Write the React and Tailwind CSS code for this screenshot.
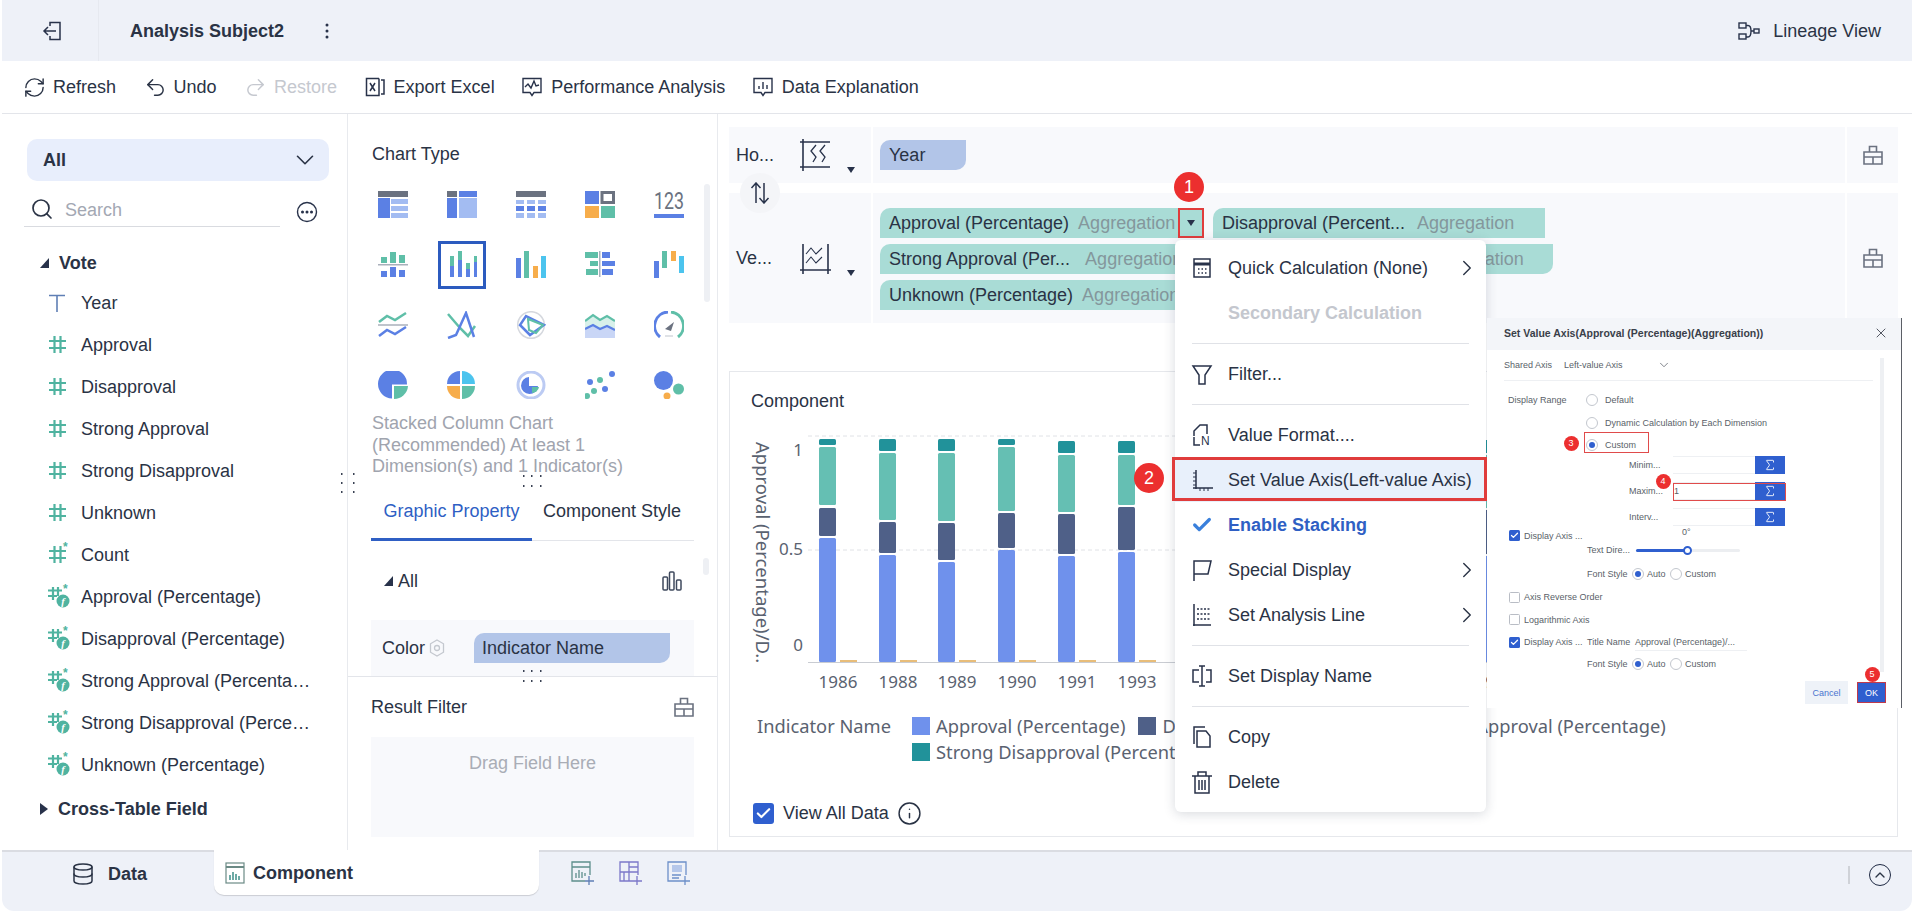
import { RefreshCw, Undo2, Redo2, Search, ChevronDown, ChevronRight, ChevronUp, X, Info, Database, Check, Sigma } from 'lucide-react'

const B = '#5b80e4'
const L = '#a3bcf2'
const T = '#5fbfa8'
const O = '#f7ad4b'
const C = '#4cc4ee'
const G = '#6b7280'

const chartIcons = [
  <><rect width="30" height="6" fill={G} /><rect y="7" width="12" height="20" fill={B} /><rect x="13" y="8" width="17" height="5" fill={L} /><rect x="13" y="15" width="17" height="5" fill={L} /><rect x="13" y="22" width="17" height="5" fill={L} /></>,
  <><rect width="10" height="6" fill={G} /><rect x="12" width="18" height="6" fill={B} /><rect y="7" width="10" height="20" fill={B} /><rect x="12" y="7" width="18" height="20" fill={L} /></>,
  <><rect width="30" height="6" fill={G} /><path d="M0 9h8v4H0zM11 9h8v4h-8zM22 9h8v4h-8zM0 22h8v5H0zM11 22h8v5h-8zM22 22h8v5h-8z" fill={L} /><path d="M0 15h8v5H0zM11 15h8v5h-8zM22 15h8v5h-8z" fill={B} /></>,
  <><rect width="14" height="13" fill={B} /><rect x="17" y="1.5" width="11.5" height="10" fill="none" stroke={G} strokeWidth="3" /><rect y="15" width="14" height="12" fill={O} /><rect x="16" y="15" width="14" height="12" fill={T} /></>,
  <><text x="15" y="18" textAnchor="middle" fontSize="24" fill={G} fontFamily="Roboto, sans-serif" textLength="30" lengthAdjust="spacingAndGlyphs">123</text><rect y="23" width="30" height="4" fill={B} /></>,
  <><path d="M3 6h6v6H3zM12 1h6v11h-6zM21 4h6v8h-6z" fill={T} /><rect y="13" width="30" height="1.5" fill="#aab0bb" /><path d="M3 20h6v6H3zM12 16h6v10h-6zM21 19h6v7h-6z" fill={B} /></>,
  <><path d="M3 5h4v10H3zM11 0h4v9h-4zM19 12h4v6h-4zM27 5h3v6h-3z" fill={T} /><path d="M3 15h4v11H3zM11 9h4v17h-4zM19 18h4v8h-4zM27 11h3v15h-3z" fill={B} /></>,
  <><rect y="7" width="5" height="20" fill={B} /><rect x="8" width="5" height="27" fill={T} /><rect x="17" y="15" width="5" height="12" fill={O} /><rect x="25" y="5" width="5" height="22" fill={C} /></>,
  <><path d="M0 1h13v6H0zM5 10h8v5H5zM1 18h12v6H1z" fill={T} /><rect x="14" width="1.5" height="26" fill="#aab0bb" /><path d="M17 1h8v6h-8zM17 10h13v5H17zM17 18h11v6H17z" fill={B} /></>,
  <><rect y="10" width="5" height="17" fill={B} /><rect x="8" width="5" height="17" fill={T} /><rect x="17" width="5" height="10" fill={O} /><rect x="25" y="5" width="5" height="17" fill={C} /></>,
  <g fill="none" strokeWidth="2.5"><path d="M1 11l8-6 8 4 11-7" stroke={T} /><path d="M0 14h30" stroke="#aab0bb" strokeWidth="1.5" /><path d="M1 25l8-6 8 4 11-7" stroke={B} /></g>,
  <g fill="none" strokeWidth="2.5"><path d="M1 3l12 14 8 8 7-10" stroke={T} /><path d="M1 27l8-3 10-22 8 24" stroke={B} /></g>,
  <g fill="none"><circle cx="15" cy="14" r="13.300" stroke="#d5d8de" strokeWidth="1.500" /><path d="M10 5l18 9-14 10L4 14z" stroke={B} strokeWidth="2.500" /><path d="M12 8l15 6-7 8-7-3z" stroke={T} strokeWidth="2" /></g>,
  <><path d="M0 10l8-6 7 5 7-4 8 5v17H0z" fill="#d8f0ea" /><path d="M0 18l8-4 7 4 7-3 8 4v8H0z" fill="#c9d6f6" /><path d="M0 10l8-6 7 5 7-4 8 5" fill="none" stroke={T} strokeWidth="2.2" /><path d="M0 18l8-4 7 4 7-3 8 4" fill="none" stroke={B} strokeWidth="2.2" /></>,
  <g fill="none"><path d="M6 26A14 14 0 0 1 14 1" stroke={B} strokeWidth="3" /><path d="M17 1a14 14 0 0 1 7 25" stroke={T} strokeWidth="3" /><path d="M11 18l9-7-3 9z" fill={G} /><path d="M11 25h8" stroke="#d5d8de" strokeWidth="1.500" /></g>,
  <><path d="M14 0v14h15A14.500 14.500 0 1 0 14 28z" fill={B} transform="translate(0 -.5)" /><path d="M16 15h14a14 14 0 0 1-14 13z" fill={T} /></>,
  <><path d="M13 0v13H0A13 13 0 0 1 13 0z" fill={B} /><path d="M15 0a13 13 0 0 1 13 13H15z" fill={C} /><path d="M13 15v13A13 13 0 0 1 0 15z" fill={O} /><path d="M15 15h13a13 13 0 0 1-13 13z" fill={T} /></>,
  <g fill="none"><circle cx="15" cy="14" r="13" stroke="#bccbf3" strokeWidth="3" /><path d="M14 6v9h9a8.500 8.500 0 1 1-9-9z" fill={B} transform="translate(-1 0)" /><path d="M16 16h7a7 7 0 0 1-7 6z" fill={T} /></g>,
  <g><circle cx="27" cy="3" r="3" fill={B} /><circle cx="15" cy="9" r="3" fill={T} /><circle cx="5" cy="11" r="3" fill={B} /><circle cx="9" cy="20" r="3" fill={T} /><circle cx="20" cy="18" r="3" fill={B} /><circle cx="2" cy="25" r="3" fill={T} /></g>,
  <g><circle cx="9.500" cy="9.500" r="9.500" fill={B} /><circle cx="24.500" cy="18" r="5.500" fill={T} /><circle cx="13" cy="25" r="3.500" fill={O} /></g>,
]

const fields = [
  ['t', 'Year'],
  ['n', 'Approval'],
  ['n', 'Disapproval'],
  ['n', 'Strong Approval'],
  ['n', 'Strong Disapproval'],
  ['n', 'Unknown'],
  ['s', 'Count'],
  ['f', 'Approval (Percentage)'],
  ['f', 'Disapproval (Percentage)'],
  ['f', 'Strong Approval (Percentage)'],
  ['f', 'Strong Disapproval (Percentage)'],
  ['f', 'Unknown (Percentage)'],
]

// top edge of each stacked segment, from the top of the bar down
const bars = [
  [1986, 439, 447, 508, 538, 445, 505, 536],
  [1988, 439, 453, 522, 555, 451, 520, 553],
  [1989, 439, 453, 523, 562, 451, 521, 560],
  [1990, 439, 447, 513, 550, 445, 511, 548],
  [1991, 441, 455, 514, 556, 453, 512, 554],
  [1993, 441, 455, 507, 552, 453, 505, 550],
  [1994, 442, 456, 510, 556, 454, 508, 554],
  [1995, 440, 452, 515, 558, 450, 513, 556],
  [1996, 441, 455, 512, 552, 453, 510, 550],
  [1997, 440, 454, 512, 554, 452, 510, 552],
  [1998, 440, 453, 514, 552, 451, 512, 550],
  [1999, 440, 455, 510, 556, 453, 508, 554],
]

function FieldIcon({ kind }) {
  if (kind === 't') {
    return (
      <svg width="18" height="20" viewBox="0 0 18 20" fill="none" stroke="#5f7fb5" strokeWidth="1.6">
        <path d="M1 2.500h16M9 2.500V19" />
      </svg>
    )
  }
  return (
    <svg width="22" height="24" viewBox="0 0 22 24" fill="none" stroke="#4fb3a0" strokeWidth="2.200" className="overflow-visible">
      {kind === 'n' || kind === 's' ? (
        <path d="M6.500 3v17M12.500 3v17M1 8h17M1 15h17" />
      ) : (
        <path d="M5 2v13M10 2v9M0 5.500h14M0 11h9" />
      )}
      {kind !== 'n' && <text x="15" y="8" fontSize="12" fontWeight="700" fill="#4fb3a0" stroke="none" fontFamily="Liberation Sans, sans-serif">*</text>}
      {kind === 'f' && (
        <>
          <circle cx="15" cy="16" r="6.500" fill="#4fb3a0" stroke="none" />
          <text x="15" y="20" textAnchor="middle" fontSize="10.500" fontWeight="700" fontStyle="italic" fill="#fff" stroke="none" fontFamily="Liberation Serif, serif">f</text>
        </>
      )}
    </svg>
  )
}

function Caret({ open }) {
  return open ? (
    <svg width="9" height="10" viewBox="0 0 9 10" fill="#28324a"><path d="M9 0v10H0z" /></svg>
  ) : (
    <svg width="8" height="12" viewBox="0 0 8 12" fill="#28324a"><path d="M0 0l8 6-8 6z" /></svg>
  )
}

function LeftPanel() {
  return (
    <div className="w-[346px] shrink-0 border-r border-[#e8eaee] flex flex-col">
      <div className="mt-[25px] ml-[25px] w-[302px] h-[42px] rounded-[10px] bg-[#e8eefc] flex items-center justify-between pl-[16px] pr-[9px]">
        <span className="font-bold">All</span>
        <ChevronDown size={30} strokeWidth={1.300} />
      </div>
      <div className="mt-[18px] ml-[22px] flex items-center h-[28px]">
        <div className="w-[256px] h-[28px] border-b border-[#d9dbe0] flex items-start gap-[11px] pl-[6px]">
          <Search size={24} strokeWidth={1.7} className="-mt-[2px]" />
          <span className="text-[#a3a8b3] leading-[22px]">Search</span>
        </div>
        <svg width="22" height="22" viewBox="0 0 22 22" className="ml-[16px] -mt-[3px]" fill="none" stroke="#28324a" strokeWidth="1.400">
          <circle cx="11" cy="11" r="9.500" />
          <circle cx="6.500" cy="11" r="0.800" fill="#28324a" />
          <circle cx="11" cy="11" r="0.800" fill="#28324a" />
          <circle cx="15.500" cy="11" r="0.800" fill="#28324a" />
        </svg>
      </div>
      <div className="mt-[24px] ml-[38px] h-[24px] flex items-center gap-[10px] font-bold">
        <Caret open />
        <span>Vote</span>
      </div>
      <div className="mt-[7px] flex flex-col">
        {fields.map(([kind, name]) => (
          <div key={name} className="h-[42px] flex items-center pl-[46px]">
            <span className="w-[33px] flex"><FieldIcon kind={kind} /></span>
            <span className="w-[231px] truncate">{name}</span>
          </div>
        ))}
      </div>
      <div className="mt-[2px] ml-[38px] h-[42px] flex items-center gap-[10px] font-bold">
        <Caret />
        <span>Cross-Table Field</span>
      </div>
    </div>
  )
}

function MiddlePanel() {
  return (
    <div className="w-[370px] shrink-0 border-r border-[#e8eaee] flex flex-col">
      <div className="h-[563px] overflow-hidden border-b border-[#e3e5ea] flex flex-col">
        <div className="mt-[28px] ml-[24px] h-[24px] leading-[24px]">Chart Type</div>
        <div className="mt-[9px] ml-[10px] w-[346px] grid grid-cols-5">
          {chartIcons.map((icon, i) => (
            <div key={i} className={`h-[60px] flex items-center justify-center ${i === 6 ? 'relative' : ''}`}>
              {i === 6 && <div className="absolute left-[11px] top-[6px] w-[48px] h-[48px] border-[3px] border-[#2c5bbf]" />}
              <svg width="30" height="28" viewBox="0 0 30 28">{icon}</svg>
            </div>
          ))}
        </div>
        <div className="-mt-[2px] ml-[24px] w-[320px] leading-[21.5px] text-[#a0a4ae]">
          Stacked Column Chart (Recommended) At least 1 Dimension(s) and 1 Indicator(s)
        </div>
        <div className="mt-[12px] mx-[23px] h-[51px] border-b border-[#e3e5ea] flex">
          <div className="w-[161px] h-[51px] border-b-[3px] border-[#2f5fc4] text-[#2f5fc4] flex items-center justify-center pb-[5px]">Graphic Property</div>
          <div className="flex-1 flex items-center pl-[11px] pb-[8px]">Component Style</div>
        </div>
        <div className="mt-[28px] mx-[36px] h-[24px] flex items-center justify-between">
          <div className="flex items-center gap-[5px]"><Caret open /><span>All</span></div>
          <svg width="20" height="20" viewBox="0 0 20 20" fill="none" stroke="#3f4a5e" strokeWidth="1.500" className="-mr-[1px]">
            <rect x="1" y="6" width="4.500" height="13" rx="1" />
            <rect x="7.500" y="1" width="4.500" height="18" rx="1" />
            <rect x="14.500" y="9" width="4.500" height="10" rx="1" />
          </svg>
        </div>
        <div className="mt-[27px] mx-[23px] h-[60px] bg-[#f8f9fc] flex items-start pt-[13px] pl-[11px]">
          <div className="w-[92px] h-[30px] flex items-center gap-[4px]">
            <span>Color</span>
            <svg width="16" height="18" viewBox="0 0 16 18" fill="none" stroke="#c4c8cf" strokeWidth="1.300">
              <path d="M8 1l6.500 3.800v8.400L8 17l-6.500-3.800V4.800z" />
              <circle cx="8" cy="9" r="2.500" />
            </svg>
          </div>
          <div className="w-[196px] h-[30px] bg-[#b2c5e8] rounded-tl-[10px] rounded-br-[10px] flex items-center pl-[8px]">Indicator Name</div>
        </div>
      </div>
      <div className="flex-1 flex flex-col px-[23px]">
        <div className="mt-[18px] h-[24px] flex items-center justify-between">
          <span>Result Filter</span>
          <CubeIcon />
        </div>
        <div className="mt-[18px] h-[100px] bg-[#f8f9fc] text-[#a9adb6] text-center pt-[14px]">Drag Field Here</div>
      </div>
    </div>
  )
}

function CubeIcon() {
  return (
    <svg width="20" height="20" viewBox="0 0 20 20" fill="none" stroke="#6b7280" strokeWidth="1.600">
      <path d="M1 7h18v12H1zM6.500 7V1.500h7V7M1 12h18M10 12v7" />
    </svg>
  )
}

function Pill({ name, agg, w, gap = 9, last, children }) {
  return (
    <div className={`h-[30px] bg-[#a9dcd6] flex items-center pl-[9px] whitespace-nowrap shrink-0 ${last ? 'rounded-br-[10px]' : ''} rounded-tl-[10px]`} style={{ width: w }}>
      <span>{name}</span>
      <span className="text-[#84979c]" style={{ marginLeft: gap }}>{agg}</span>
      {children}
    </div>
  )
}

function AxisIcon({ vertical }) {
  return (
    <svg width="32" height="32" viewBox="0 0 32 32" fill="none" stroke="#28324a" strokeWidth="1.600">
      {vertical ? (
        <>
          <path d="M3 2v30M28 2v30M0 28h31" />
          <path d="M6 12l5-6 5 6 6-6 M6 21l5-6 5 6 6-6" strokeWidth="1.100" />
        </>
      ) : (
        <>
          <path d="M3 0v32M0 3h30M0 28h30" />
          <path d="M16 6l-5 6 5 6-3 5M25 6l-5 6 5 6-3 5" strokeWidth="1.300" />
        </>
      )}
    </svg>
  )
}

function FieldRow({ label, vertical, h, children }) {
  return (
    <div className="flex gap-[2px]" style={{ height: h }}>
      <div className="w-[142px] bg-[#f8f9fc] flex items-center pl-[7px] relative">
        <span className="w-[64px]">{label}</span>
        <AxisIcon vertical={vertical} />
        <span className="ml-[15px] mt-[30px] w-0 h-0 border-x-[4px] border-x-transparent border-t-[6px] border-t-[#28324a]" />
      </div>
      <div className="flex-1 bg-[#f8f9fc] overflow-hidden">{children}</div>
      <div className="w-[51px] bg-[#f8f9fc] flex items-center justify-center"><CubeIcon /></div>
    </div>
  )
}

function Chart() {
  return (
    <svg viewBox="730 430 1167 270" className="block w-[1167px] h-[270px] shrink-0" fontFamily="Noto Sans, sans-serif" fontSize="17" fill="#5a6270">
      <text transform="translate(756 442) rotate(90)" fontSize="18.500">Approval (Percentage)/D..</text>
      <text x="803" y="456" textAnchor="end">1</text>
      <text x="803" y="555" textAnchor="end">0.5</text>
      <text x="803" y="651" textAnchor="end">0</text>
      <path d="M808 436H1490M808 550H1490" stroke="#e0e2e6" strokeDasharray="4 3" />
      <path d="M808 662.500H1490" stroke="#c9ccd2" />
      {bars.map(([year, dk, lt, sl, bl, dkEnd, ltEnd, slEnd], i) => {
        const x = 819 + Math.round(i * 59.700)
        return (
          <g key={year}>
            <rect x={x} y={dk} width="17" height={dkEnd - dk} rx="1.500" fill="#21929a" />
            <rect x={x} y={lt} width="17" height={ltEnd - lt} rx="1.500" fill="#65bfb3" />
            <rect x={x} y={sl} width="17" height={slEnd - sl} rx="1.500" fill="#4f6088" />
            <rect x={x} y={bl} width="17" height={662 - bl} rx="1.500" fill="#6f91ec" />
            <rect x={x + 21} y="660" width="17" height="2" fill="#e8bd7a" />
            <text x={x + 19} y="688" textAnchor="middle">{year}</text>
          </g>
        )
      })}
    </svg>
  )
}

function ChartCard() {
  const legend = [
    ['#6f91ec', 'Approval (Percentage)'],
    ['#4f6088', 'Disapproval (Percentage)'],
    ['#65bfb3', 'Strong Approval (Percentage)'],
    ['#21929a', 'Strong Disapproval (Percentage)'],
    ['#e8bd7a', 'Unknown (Percentage)'],
  ]
  return (
    <div className="mt-[48px] h-[466px] border border-[#e6e8ec] flex flex-col">
      <div className="mt-[17px] ml-[21px] h-[24px] leading-[24px] shrink-0">Component</div>
      <div className="mt-[17px] shrink-0"><Chart /></div>
      <div className="mt-[13px] ml-[27px] flex text-[18.300px] text-[#5a6270] font-['Noto_Sans',sans-serif] leading-[26px]">
        <span className="w-[155px] shrink-0">Indicator Name</span>
        <div className="w-[780px] flex flex-wrap gap-x-[13px]">
          {legend.map(([color, name]) => (
            <span key={name} className="flex items-center gap-[6px] whitespace-nowrap">
              <span className="w-[18px] h-[18px] shrink-0" style={{ background: color }} />
              {name}
            </span>
          ))}
        </div>
      </div>
      <div className="mt-[36px] ml-[23px] flex items-center h-[24px]">
        <span className="w-[21px] h-[21px] rounded-[3px] bg-[#2f5fcf] flex items-center justify-center">
          <Check size={17} strokeWidth={3} color="#fff" />
        </span>
        <span className="ml-[9px] mr-[8px]">View All Data</span>
        <Info size={25} strokeWidth={1.400} />
      </div>
    </div>
  )
}

function Badge({ n, x, y, size = 30, text = 'text-[18px]' }) {
  return (
    <div className={`absolute rounded-full bg-[#ec2f2f] text-white flex items-center justify-center ${text}`} style={{ left: x - size / 2, top: y - size / 2, width: size, height: size }}>
      {n}
    </div>
  )
}

function MenuIcon({ children }) {
  return (
    <svg width="22" height="24" viewBox="0 0 22 24" fill="none" stroke="#28324a" strokeWidth="1.500" className="shrink-0">
      {children}
    </svg>
  )
}

function MenuItem({ icon, children, arrow, className = '' }) {
  return (
    <div className={`h-[45px] flex items-center pl-[16px] pr-[6px] ${className}`}>
      <span className="w-[37px] shrink-0 flex">{icon}</span>
      <span className="flex-1 whitespace-nowrap">{children}</span>
      {arrow && <ChevronRight size={26} strokeWidth={1.300} />}
    </div>
  )
}

function Divider() {
  return <div className="mx-[17px] mt-[8px] mb-[7px] h-px bg-[#e0e2e7]" />
}

function ContextMenu() {
  return (
    <div className="absolute left-[1175px] top-[240px] w-[311px] h-[572px] bg-white rounded-[6px] shadow-[0_2px_12px_rgba(40,50,70,0.18)] pt-[5px]">
      <MenuItem arrow icon={<MenuIcon><rect x="3" y="3" width="16" height="18" /><path d="M3 8h16" strokeWidth="3" /><path d="M7 13h1.500M10.500 13H12M14 13h1.500M7 17h1.500M10.500 17H12M14 17h1.500" /></MenuIcon>}>Quick Calculation (None)</MenuItem>
      <MenuItem className="font-bold text-[#c4c7ce]">Secondary Calculation</MenuItem>
      <Divider />
      <MenuItem icon={<MenuIcon><path d="M2 4h18l-6 9v9H8v-9z" /></MenuIcon>}>Filter...</MenuItem>
      <Divider />
      <MenuItem icon={<MenuIcon><path d="M3 13V8l6-6h7v9M3 14v8h6" /><text x="10" y="22" fontSize="12" fill="#28324a" stroke="none" fontFamily="Liberation Sans, sans-serif">N</text></MenuIcon>}>Value Format....</MenuItem>
      <MenuItem className="bg-[#e8f0fb]" icon={<MenuIcon><path d="M5 2v19M2 20h20" /><path d="M2 5h3M2 9h3M2 13h3M2 17h3M9 20v3M13 20v3M17 20v3" strokeWidth="1" /></MenuIcon>}>Set Value Axis(Left-value Axis)</MenuItem>
      <MenuItem className="font-bold text-[#2f5fc4]" icon={<Check size={22} strokeWidth={3.500} color="#3a80dc" />}>Enable Stacking</MenuItem>
      <MenuItem arrow icon={<MenuIcon><path d="M3 23V3h17l-3 13H3" /></MenuIcon>}>Special Display</MenuItem>
      <MenuItem arrow icon={<MenuIcon><path d="M6 6h14M6 11h14M6 16h14" strokeDasharray="2 1.500" /><path d="M3 1v22M2 22h18" /></MenuIcon>}>Set Analysis Line</MenuItem>
      <Divider />
      <MenuItem icon={<MenuIcon><path d="M8 6H2v12h6M15 6h5v12h-5M8 2h6M8 22h6M11 2v20" /></MenuIcon>}>Set Display Name</MenuItem>
      <Divider />
      <MenuItem icon={<MenuIcon><path d="M3 19V2h11M6 22V6h9l4 5v11z" /></MenuIcon>}>Copy</MenuItem>
      <MenuItem icon={<MenuIcon><path d="M1 6h20M7 6V2h8v4M4 6v17h14V6M8 10v10M11 10v10M14 10v10" /></MenuIcon>}>Delete</MenuItem>
    </div>
  )
}

function Radio({ on }) {
  return (
    <span className="w-[12px] h-[12px] rounded-full border border-[#c3c7ce] flex items-center justify-center shrink-0 bg-white">
      {on && <span className="w-[6px] h-[6px] rounded-full bg-[#2f5fcf]" />}
    </span>
  )
}

function Tick({ on }) {
  return on ? (
    <span className="w-[11px] h-[11px] rounded-[1.500px] bg-[#2f5fcf] flex items-center justify-center shrink-0">
      <Check size={9} strokeWidth={3.500} color="#fff" />
    </span>
  ) : (
    <span className="w-[11px] h-[11px] rounded-[1.500px] border border-[#b9bdc5] shrink-0" />
  )
}

function FontStyleRow() {
  return (
    <div className="flex items-center h-full">
      <span className="w-[45px]">Font Style</span>
      <Radio on />
      <span className="ml-[3px] w-[23px]">Auto</span>
      <Radio />
      <span className="ml-[3px]">Custom</span>
    </div>
  )
}

function SigmaInput({ label, value }) {
  return (
    <div className="h-[26px] flex items-center pl-[142px]">
      <span className="w-[44px]">{label}</span>
      <span className="w-[82px] h-[18px] border-y border-[#eef0f3] leading-[16px] pl-[1px]">{value}</span>
      <span className="w-[30px] h-[18px] bg-[#2f5fcf] flex items-center justify-center">
        <Sigma size={14} color="#fff" strokeWidth={1.500} />
      </span>
    </div>
  )
}

function AxisDialog() {
  return (
    <div className="absolute left-[1487px] top-[318px] w-[415px] h-[390px] bg-white border-r border-[#5b5f66] text-[9px] leading-[12px] text-[#5a5f69] font-['Liberation_Sans',sans-serif]">
      <div className="h-[32px] bg-[#f3f5f9] flex items-center justify-between pl-[17px] pr-[12px] pb-[2px]">
        <span className="font-bold text-[#3a3f4a] text-[10.500px]">Set Value Axis(Approval (Percentage)(Aggregation))</span>
        <X size={16} strokeWidth={1.300} color="#3a3f4a" />
      </div>
      <div className="mx-[17px] w-[369px] h-[31px] border-b border-[#eef0f3] flex items-center">
        <span className="w-[60px]">Shared Axis</span>
        <span className="w-[93px]">Left-value Axis</span>
        <ChevronDown size={14} strokeWidth={1.300} />
      </div>
      <div className="mt-[8px] -mb-[4.500px] pl-[21px]">
        <div className="h-[22.500px] flex items-center">
          <span className="w-[78px]">Display Range</span><Radio /><span className="ml-[7px]">Default</span>
        </div>
        <div className="h-[22.500px] flex items-center pl-[78px]">
          <Radio /><span className="ml-[7px]">Dynamic Calculation by Each Dimension</span>
        </div>
        <div className="h-[22.500px] flex items-center pl-[78px]">
          <Radio on /><span className="ml-[7px]">Custom</span>
        </div>
      </div>
      <SigmaInput label="Minim..." />
      <SigmaInput label="Maxim..." value="1" />
      <SigmaInput label="Interv..." />
      <div className="-mt-[4px] flex pl-[22px] h-[60px]">
        <div className="w-[78px] pt-[4px] flex items-start gap-[4px] whitespace-nowrap"><Tick on /><span>Display Axis ...</span></div>
        <div className="flex-1">
          <div className="h-[12px] pl-[95px]">0°</div>
          <div className="h-[24px] flex items-center">
            <span className="w-[49px]">Text Dire...</span>
            <div className="relative w-[104px] h-[3px] rounded-full bg-[#eceef1]">
              <div className="w-[52px] h-[3px] rounded-full bg-[#2f5fcf]" />
              <div className="absolute left-[47px] -top-[3px] w-[9px] h-[9px] rounded-full bg-white border-2 border-[#2f5fcf]" />
            </div>
          </div>
          <div className="h-[24px]"><FontStyleRow /></div>
        </div>
      </div>
      <div className="h-[22.500px] flex items-center gap-[4px] pl-[22px]"><Tick /><span>Axis Reverse Order</span></div>
      <div className="h-[22.500px] flex items-center gap-[4px] pl-[22px]"><Tick /><span>Logarithmic Axis</span></div>
      <div className="h-[22px] flex items-center pl-[22px] whitespace-nowrap">
        <span className="w-[78px] flex items-center gap-[4px]"><Tick on /><span>Display Axis ...</span></span>
        <span className="w-[48px]">Title Name</span>
        <span className="w-[112px] h-[18px] border-b border-[#eef0f3] leading-[18px]">Approval (Percentage)/...</span>
      </div>
      <div className="h-[22px] pl-[100px]"><FontStyleRow /></div>
      <div className="mt-[6px] h-[23px] flex justify-end items-center gap-[9px] pr-[15px]">
        <span className="w-[43px] h-[23px] bg-[#eef2f8] text-[#4a74cf] flex items-center justify-center">Cancel</span>
        <span className="w-[29px] h-[21px] bg-[#2f5fcf] border border-[#c0394b] text-white flex items-center justify-center">OK</span>
      </div>
      <div className="absolute left-[393px] top-[40px] w-[4px] h-[314px] bg-[#eef0f3]" />
      <div className="absolute left-[97px] top-[114px] w-[65px] h-[21px] border border-[#e04b4b]" />
      <div className="absolute left-[186px] top-[165px] w-[113px] h-[18px] border border-[#e04b4b]" />
      <Badge n="3" x={84} y={125} size={15} text="text-[9px]" />
      <Badge n="4" x={176} y={163} size={15} text="text-[9px]" />
      <Badge n="5" x={385} y={356} size={15} text="text-[9px]" />
    </div>
  )
}

function HandleDots({ x, y, vertical }) {
  const cols = vertical ? [0, 12] : [0, 8, 17]
  const rows = vertical ? [0, 9, 18] : [0, 10]
  return (
    <svg className="absolute" style={{ left: x, top: y }} width="20" height="20" fill="#3a4254">
      {cols.map((cx) => rows.map((cy) => <rect key={`${cx}-${cy}`} x={cx} y={cy} width="1.500" height="2" />))}
    </svg>
  )
}

function ToolItem({ icon, children, muted, gap = 7 }) {
  return (
    <div className={`flex items-center ${muted ? 'text-[#c5c8cf]' : ''}`} style={{ gap }}>
      {icon}
      <span>{children}</span>
    </div>
  )
}

function BottomBar() {
  return (
    <div className="h-[61px] shrink-0 bg-[#eef1f8] border-t-2 border-[#dadce2] rounded-b-[12px] flex items-start relative">
      <div className="w-[212px] h-[43px] flex items-center pl-[69px] gap-[13px] font-bold">
        <Database size={24} strokeWidth={1.500} />
        <span>Data</span>
      </div>
      <div className="w-[325px] h-[45px] bg-white rounded-b-[10px] -mt-[2px] shadow-[0_1px_1px_rgba(0,0,0,0.15)] flex items-center pl-[11px] gap-[8px] font-bold">
        <svg width="20" height="22" viewBox="0 0 20 22" fill="none" stroke="#6b8a85" strokeWidth="1.200">
          <rect x="1" y="1" width="18" height="20" />
          <path d="M1 5h18" strokeWidth="2" />
          <path d="M5 18v-5M8 18v-8M11 18v-6M14 18v-4" stroke="#3e8f88" strokeWidth="1.500" />
        </svg>
        <span>Component</span>
      </div>
      <div className="ml-[32px] mt-[9px] flex gap-[25px]">
        <svg width="23" height="25" viewBox="0 0 23 25" fill="none" stroke="#5d8f8c" strokeWidth="1.300">
          <path d="M14 20H1V1h18v13M1 6h18" />
          <path d="M5 17v-5M8 17v-8M11 17v-6M14 15v-3" />
          <path d="M18 15v9M14 20h9" stroke="#5f7fb5" />
        </svg>
        <svg width="23" height="25" viewBox="0 0 23 25" fill="none" stroke="#7c78c9" strokeWidth="1.300">
          <path d="M14 20H1V1h18v13M10 1v19M1 11h18M5 11v9M10 6h9" />
          <path d="M18 15v9M14 20h9" />
        </svg>
        <svg width="23" height="25" viewBox="0 0 23 25" fill="none" stroke="#6d90c9" strokeWidth="1.300">
          <path d="M14 20H1V1h18v13" />
          <rect x="5" y="4" width="10" height="7" fill="#b5c7ea" stroke="none" />
          <path d="M5 14h9M5 17h7M18 15v9M14 20h9" />
        </svg>
      </div>
      <div className="absolute left-[1846px] top-[14px] w-[2px] h-[18px] bg-[#cfd2d8]" />
      <div className="absolute left-[1867px] top-[12px] w-[22px] h-[22px] rounded-full border-[1.500px] border-[#1f2a44] flex items-center justify-center">
        <ChevronUp size={16} strokeWidth={2} />
      </div>
    </div>
  )
}

export default function App() {
  return (
    <div className="relative w-[1917px] h-[911px] overflow-hidden bg-white font-['Liberation_Sans',Arial,sans-serif] text-[18px] leading-[24px] text-[#2a3345]">
      <div className="ml-[2px] w-[1910px] h-[911px] flex flex-col">
        <header className="h-[61px] shrink-0 bg-[#eef1f8] flex items-center">
          <div className="w-[97px] h-full border-r border-[#e6e9f0] flex items-center justify-center pl-[4px]">
            <svg width="20" height="20" viewBox="0 0 20 20" fill="none" stroke="#28324a" strokeWidth="1.500">
              <path d="M8 5V1.500h10v17H8V15M14 10H2M6 6l-4 4 4 4" />
            </svg>
          </div>
          <span className="ml-[31px] font-bold">Analysis Subject2</span>
          <svg width="4" height="16" viewBox="0 0 4 16" fill="#28324a" className="ml-[41px]">
            <circle cx="2" cy="2" r="1.500" /><circle cx="2" cy="8" r="1.500" /><circle cx="2" cy="14" r="1.500" />
          </svg>
          <div className="ml-auto mr-[31px] flex items-center gap-[13px]">
            <svg width="22" height="18" viewBox="0 0 22 18" fill="none" stroke="#28324a" strokeWidth="1.400">
              <rect x="1" y="1" width="7" height="5" />
              <rect x="1" y="12" width="7" height="5" />
              <path d="M8 3.500h2c3 0 3 3 3 5.500s0 6-3 6H8M13 9h3" />
              <rect x="16" y="7" width="5" height="4" />
            </svg>
            <span>Lineage View</span>
          </div>
        </header>
        <div className="h-[53px] shrink-0 border-b border-[#e3e5ea] flex items-center pl-[21px] gap-[27.500px]">
          <ToolItem icon={<RefreshCw size={23} strokeWidth={1.500} />}>Refresh</ToolItem>
          <ToolItem icon={<Undo2 size={23} strokeWidth={1.500} />}>Undo</ToolItem>
          <ToolItem muted icon={<Redo2 size={23} strokeWidth={1.500} />}>Restore</ToolItem>
          <ToolItem gap={9} icon={
            <svg width="20" height="20" viewBox="0 0 20 20" fill="none" stroke="#28324a" strokeWidth="1.500">
              <path d="M14 1.500H1.500v17H14V1.500M16 3h3v14h-3M5 6l5 8M10 6l-5 8" />
            </svg>
          }>Export Excel</ToolItem>
          <ToolItem gap={9} icon={
            <svg width="20" height="20" viewBox="0 0 20 20" fill="none" stroke="#28324a" strokeWidth="1.400">
              <path d="M1 1.500h18v14h-7l-2 3-2-3H1zM3 10l3-3 3 4 3-7 2 5 3-1" />
            </svg>
          }>Performance Analysis</ToolItem>
          <ToolItem gap={9} icon={
            <svg width="20" height="20" viewBox="0 0 20 20" fill="none" stroke="#28324a" strokeWidth="1.400">
              <path d="M1 1.500h18v14h-7l-2 3-2-3H1zM6 9v3M10 5v7M14 8v4" />
            </svg>
          }>Data Explanation</ToolItem>
        </div>
        <div className="flex-1 min-h-0 flex">
          <LeftPanel />
          <MiddlePanel />
          <main className="flex-1 min-w-0 pl-[11px] pr-[14px]">
            <div className="mt-[13px] flex flex-col gap-[10px]">
              <FieldRow label="Ho..." h={56}>
                <div className="mt-[13px] ml-[7px] w-[86px] h-[30px] bg-[#b2c5e8] rounded-tl-[10px] rounded-br-[10px] flex items-center pl-[9px]">Year</div>
              </FieldRow>
              <FieldRow label="Ve..." vertical h={130}>
                <div className="pt-[15px] pl-[7px] flex flex-col gap-[6px]">
                  <div className="flex gap-[9px]">
                    <Pill name="Approval (Percentage)" agg="Aggregation" w={324}>
                      <span className="ml-[3px] w-[26px] h-[30px] border-2 border-[#e03c3c] flex items-center justify-center">
                        <span className="w-0 h-0 border-x-[4px] border-x-transparent border-t-[6px] border-t-[#28324a]" />
                      </span>
                    </Pill>
                    <Pill name="Disapproval (Percent..." agg="Aggregation" gap={12} w={332} />
                  </div>
                  <div className="flex gap-[9px]">
                    <Pill name="Strong Approval (Per..." agg="Aggregation" gap={15} w={324} />
                    <Pill name="Strong Disapproval (P..." agg="Aggregation" gap={16} w={340} last />
                  </div>
                  <Pill name="Unknown (Percentage)" agg="Aggregation" w={324} last />
                </div>
              </FieldRow>
            </div>
            <ChartCard />
          </main>
        </div>
        <BottomBar />
      </div>
      <div className="absolute left-[740px] top-[173px] w-[40px] h-[40px] rounded-full bg-[#f4f5f8] flex items-center justify-center">
        <svg width="22" height="22" viewBox="0 0 22 22" fill="none" stroke="#28324a" strokeWidth="1.500">
          <path d="M7 21V1M2.500 6L7 1l4.500 5M15 1v20M10.500 16l4.500 5 4.500-5" />
        </svg>
      </div>
      <HandleDots x={341} y={473} vertical />
      <HandleDots x={523} y={475} />
      <HandleDots x={523} y={670} />
      <div className="absolute left-[704px] top-[184px] w-[6px] h-[118px] rounded-full bg-[#eef0f4]" />
      <div className="absolute left-[703px] top-[558px] w-[6px] h-[17px] rounded-full bg-[#eef0f4]" />
      <ContextMenu />
      <div className="absolute left-[1172px] top-[457px] w-[315px] h-[44px] border-[3px] border-[#e03c3c]" />
      <Badge n="1" x={1189} y={187} />
      <Badge n="2" x={1149} y={478} />
      <AxisDialog />
    </div>
  )
}
